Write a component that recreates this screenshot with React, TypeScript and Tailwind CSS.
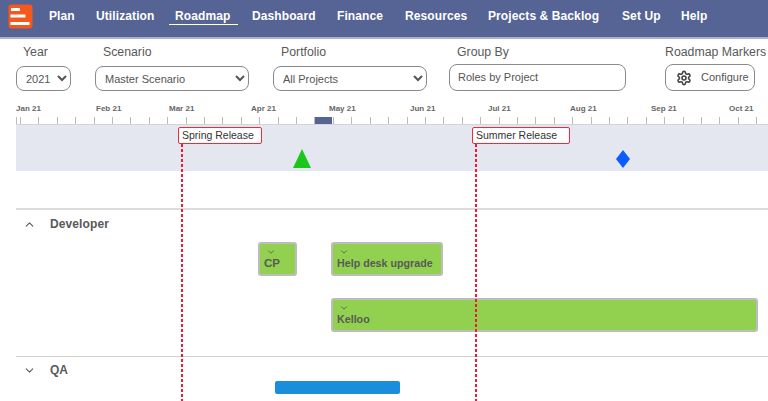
import { ChevronDown, ChevronUp } from "lucide-react";

const navItems = [
  { label: "Plan", width: "w-[47px]" },
  { label: "Utilization", width: "w-[79px]" },
  { label: "Roadmap", width: "w-[77px]", active: true },
  { label: "Dashboard", width: "w-[85px]" },
  { label: "Finance", width: "w-[68px]" },
  { label: "Resources", width: "w-[83px]" },
  { label: "Projects & Backlog", width: "w-[134px]" },
  { label: "Set Up", width: "w-[59px]" },
  { label: "Help", width: "w-[40px]" },
];

const months = [
  { label: "Jan 21", width: "w-[80px]" },
  { label: "Feb 21", width: "w-[73px]" },
  { label: "Mar 21", width: "w-[82px]" },
  { label: "Apr 21", width: "w-[78px]" },
  { label: "May 21", width: "w-[81px]" },
  { label: "Jun 21", width: "w-[78px]" },
  { label: "Jul 21", width: "w-[82px]" },
  { label: "Aug 21", width: "w-[81px]" },
  { label: "Sep 21", width: "w-[78px]" },
  { label: "Oct 21", width: "w-[40px]" },
];

const ticks = Array.from({ length: 41 }, (_, i) => i);

function Logo() {
  return (
    <svg width="25" height="25" viewBox="0 0 25 25" className="shrink-0">
      <rect x="0.5" y="0.5" width="24" height="24" rx="3" fill="#f4581c" />
      <rect x="3" y="4" width="9" height="3" fill="#fff" />
      <rect x="2.5" y="10.5" width="15" height="3" fill="#fff" />
      <rect x="2.5" y="18" width="19" height="3" fill="#fff" />
    </svg>
  );
}

function Gear() {
  return (
    <svg width="16" height="16" viewBox="0 0 24 24" fill="none" stroke="#444" strokeWidth="2.4" strokeLinecap="round" strokeLinejoin="round">
      <path d="M12.22 2h-.44a2 2 0 0 0-2 2v.18a2 2 0 0 1-1 1.73l-.43.25a2 2 0 0 1-2 0l-.15-.08a2 2 0 0 0-2.73.73l-.22.38a2 2 0 0 0 .73 2.73l.15.1a2 2 0 0 1 1 1.72v.51a2 2 0 0 1-1 1.74l-.15.09a2 2 0 0 0-.73 2.73l.22.38a2 2 0 0 0 2.73.73l.15-.08a2 2 0 0 1 2 0l.43.25a2 2 0 0 1 1 1.73V20a2 2 0 0 0 2 2h.44a2 2 0 0 0 2-2v-.18a2 2 0 0 1 1-1.73l.43-.25a2 2 0 0 1 2 0l.15.08a2 2 0 0 0 2.73-.73l.22-.39a2 2 0 0 0-.73-2.73l-.15-.08a2 2 0 0 1-1-1.74v-.5a2 2 0 0 1 1-1.74l.15-.09a2 2 0 0 0 .73-2.73l-.22-.38a2 2 0 0 0-2.73-.73l-.15.08a2 2 0 0 1-2 0l-.43-.25a2 2 0 0 1-1-1.73V4a2 2 0 0 0-2-2z" />
      <circle cx="12" cy="12" r="3" />
    </svg>
  );
}

function Bar({ label, className }: { label: string; className: string }) {
  return (
    <div className={`flex h-[34px] flex-col rounded-[3px] border-2 border-[#bdbdbd] bg-[#92d050] pl-[4px] text-[#595959] ${className}`}>
      <ChevronDown size={10} strokeWidth={2} className="ml-[2px] mt-[3px] shrink-0" />
      <span className="-mt-[1px] leading-[14px]">{label}</span>
    </div>
  );
}

function Release({ label, className }: { label: string; className: string }) {
  return (
    <div className={`absolute top-[127px] bottom-0 ${className}`}>
      <div className="h-[17px] rounded-[2px] border border-[#ee2a3c] bg-white pl-[3px] text-[10.5px] leading-[15px] text-[#333]">
        {label}
      </div>
      <div className="ml-[3px] h-full w-[2px] bg-[repeating-linear-gradient(to_bottom,#ee1c38_0_3px,transparent_3px_5px)]" />
    </div>
  );
}

export default function App() {
  return (
    <div className="relative h-[401px] w-[768px] overflow-hidden bg-white font-['Liberation_Sans',Arial,sans-serif]">
      {/* top nav */}
      <nav className="flex h-[39px] items-center border-b-2 border-[#a9b3cc] bg-[#556494] pl-[8px]">
        <div className="mb-[4px] mr-[16px] flex">
          <Logo />
        </div>
        {navItems.map((item) => (
          <div key={item.label} className={`mb-[6px] shrink-0 text-[12px] font-bold tracking-[0.1px] text-white ${item.width}`}>
            <span className={`inline-block pb-[1px] leading-[14px] ${item.active ? "border-b border-white pl-[6px] pr-[8px] -ml-[6px]" : ""}`}>{item.label}</span>
          </div>
        ))}
      </nav>

      {/* filters */}
      <div className="flex pl-[16px] pt-[5px] text-[11px] text-[#595959]">
        <div className="mr-[24px] w-[55px]">
          <div className="mb-[6px] pl-[7px] text-[12.3px] leading-[16px]">Year</div>
          <select className="h-[25px] w-[55px] rounded-lg border border-[#8a8a8a] bg-white pl-[5px] text-[11px] text-[#555]">
            <option>2021</option>
          </select>
        </div>
        <div className="mr-[24px] w-[154px]">
          <div className="mb-[6px] pl-[8px] text-[12.3px] leading-[16px]">Scenario</div>
          <select className="h-[25px] w-[154px] rounded-lg border border-[#8a8a8a] bg-white pl-[5px] text-[11px] text-[#555]">
            <option>Master Scenario</option>
          </select>
        </div>
        <div className="mr-[22px] w-[154px]">
          <div className="mb-[6px] pl-[8px] text-[12.3px] leading-[16px]">Portfolio</div>
          <select className="h-[25px] w-[154px] rounded-lg border border-[#8a8a8a] bg-white pl-[5px] text-[11px] text-[#555]">
            <option>All Projects</option>
          </select>
        </div>
        <div className="mr-[39px] w-[177px]">
          <div className="mb-[4px] pl-[8px] text-[12.3px] leading-[16px]">Group By</div>
          <div className="flex h-[27px] items-center rounded-lg border border-[#8a8a8a] pl-[8px] text-[#555]">Roles by Project</div>
        </div>
        <div className="shrink-0">
          <div className="mb-[4px] whitespace-nowrap text-[12.3px] leading-[16px]">Roadmap Markers</div>
          <div className="flex h-[27px] w-[90px] items-center gap-[9px] rounded-lg border border-[#8a8a8a] pl-[10px] text-[#555]">
            <Gear />
            Configure
          </div>
        </div>
      </div>

      {/* month labels */}
      <div className="flex pl-[16px] pt-[12px] text-[8px] font-bold leading-[11px] text-[#666]">
        {months.map((m) => (
          <div key={m.label} className={`shrink-0 ${m.width}`}>{m.label}</div>
        ))}
      </div>

      {/* ticks */}
      <div className="ml-[16px] mt-[3px] flex h-[8px] border-b border-[#d4d4d4]">
        <div className="w-[4px] shrink-0 border-l border-[#bbb]" />
        {ticks.map((t) => (
          <div key={t} className={`w-[18.42px] shrink-0 border-l border-[#bbb] ${t === 16 ? "-ml-[1px] mr-[1px] bg-[#556494]" : ""}`} />
        ))}
      </div>

      {/* markers band */}
      <div className="ml-[16px] h-[46px] bg-[#e4e7f0]" />
      <div className="ml-[16px] h-[37px]" />

      {/* developer */}
      <div className="ml-[16px] h-[148px] border-t-2 border-[#dcdcdc]">
        <div className="flex h-[28px] items-center text-[12px] font-bold tracking-[0.1px] text-[#595959]">
          <ChevronUp size={13} strokeWidth={2} className="ml-[7px] mr-[14px]" />
          Developer
        </div>
        <div className="mt-[4px] flex text-[10.7px] font-bold">
          <Bar label="CP" className="ml-[242px] w-[39px] text-[11.5px]" />
          <Bar label="Help desk upgrade" className="ml-[34px] w-[112px]" />
        </div>
        <div className="mt-[22px] flex text-[10.7px] font-bold">
          <Bar label="Kelloo" className="ml-[315px] w-[427px]" />
        </div>
      </div>

      {/* qa */}
      <div className="ml-[16px] border-t border-[#cfcfcf]">
        <div className="flex h-[26px] items-center text-[12px] font-bold text-[#595959]">
          <ChevronDown size={13} strokeWidth={2} className="ml-[7px] mr-[14px]" />
          QA
        </div>
        <div className="-mt-[2px] ml-[259px] h-[13px] w-[125px] rounded-[2px] bg-[#1a8edb]" />
      </div>

      {/* release lines and markers lie over the timeline */}
      <Release label="Spring Release" className="left-[178px] w-[84px]" />
      <Release label="Summer Release" className="left-[472px] w-[98px]" />
      <svg width="20" height="20" viewBox="0 0 20 20" className="absolute left-[292px] top-[149px]">
        <polygon points="10,0 19,19 1,19" fill="#1cc71c" />
      </svg>
      <svg width="16" height="20" viewBox="0 0 16 20" className="absolute left-[615px] top-[149px]">
        <polygon points="8,1 15,10 8,19 1,10" fill="#0a5cff" />
      </svg>
    </div>
  );
}
